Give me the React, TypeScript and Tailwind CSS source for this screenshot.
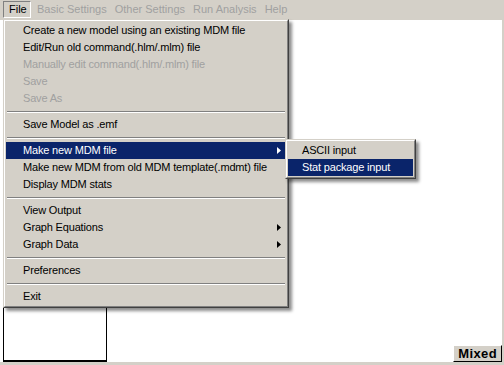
import React from 'react';

type Item =
  | { kind: 'item'; label: string; disabled?: boolean; active?: boolean; sub?: boolean }
  | { kind: 'sep' };

const fileMenu: Item[] = [
  { kind: 'item', label: 'Create a new model using an existing MDM file' },
  { kind: 'item', label: 'Edit/Run old command(.hlm/.mlm) file' },
  { kind: 'item', label: 'Manually edit command(.hlm/.mlm) file', disabled: true },
  { kind: 'item', label: 'Save', disabled: true },
  { kind: 'item', label: 'Save As', disabled: true },
  { kind: 'sep' },
  { kind: 'item', label: 'Save Model as .emf' },
  { kind: 'sep' },
  { kind: 'item', label: 'Make new MDM file', active: true, sub: true },
  { kind: 'item', label: 'Make new MDM from old MDM template(.mdmt) file' },
  { kind: 'item', label: 'Display MDM stats' },
  { kind: 'sep' },
  { kind: 'item', label: 'View Output' },
  { kind: 'item', label: 'Graph Equations', sub: true },
  { kind: 'item', label: 'Graph Data', sub: true },
  { kind: 'sep' },
  { kind: 'item', label: 'Preferences' },
  { kind: 'sep' },
  { kind: 'item', label: 'Exit' },
];

const subMenu: Item[] = [
  { kind: 'item', label: 'ASCII input' },
  { kind: 'item', label: 'Stat package input', active: true },
];

function Arrow({ white }: { white?: boolean }) {
  return (
    <svg width="4" height="7" viewBox="0 0 4 7" className="shrink-0">
      <path d="M0 0 L4 3.5 L0 7 Z" fill={white ? '#ffffff' : '#000000'} />
    </svg>
  );
}

function MenuList({ items, pl }: { items: Item[]; pl: string }) {
  return (
    <div className="flex flex-col p-px">
      {items.map((it, i) =>
        it.kind === 'sep' ? (
          <div key={i} className="h-[9px] flex flex-col justify-center px-px">
            <div className="h-px bg-[#808080]" />
            <div className="h-px bg-white" />
          </div>
        ) : (
          <div
            key={i}
            className={`h-[17px] flex items-center justify-between pr-[5px] ${pl} ${
              it.active ? 'bg-[#0a246a] text-white' : it.disabled ? 'text-[#a0a0a0]' : 'text-black'
            }`}
          >
            <span className="whitespace-nowrap tracking-[-0.17px]">{it.label}</span>
            {it.sub && <Arrow white={it.active} />}
          </div>
        )
      )}
    </div>
  );
}

export default function App() {
  return (
    <div
      className="relative w-[504px] h-[365px] bg-[#d4d0c8] overflow-hidden text-[11px] leading-[17px]"
      style={{ fontFamily: '"Liberation Sans", Arial, sans-serif' }}
    >
      {/* menu bar */}
      <div className="h-[20px] flex items-start pt-px pl-[3px] text-[#a0a0a0]">
        <div className="h-[17px] w-[28px] pl-[5px] border border-t-[#808080] border-l-[#808080] border-b-white border-r-white text-black flex items-center">
          File
        </div>
        <div className="pl-[6px] pr-[4px] h-[17px] flex items-center">Basic Settings</div>
        <div className="px-[4px] h-[17px] flex items-center">Other Settings</div>
        <div className="px-[4px] h-[17px] flex items-center">Run Analysis</div>
        <div className="px-[4px] h-[17px] flex items-center">Help</div>
      </div>

      {/* workspace */}
      <div className="relative h-[342px] mr-[2px] bg-white">
        <div className="absolute left-[3px] top-[275px] w-[104px] h-[67px] border border-black border-b-2 bg-white" />
        <div className="absolute right-0 bottom-0 h-[17px] px-[4px] flex items-center bg-[#d4d0c8] border border-t-white border-l-white border-r-black border-b-black font-bold text-[13px] text-black tracking-[0.4px]">
          Mixed
        </div>
      </div>

      {/* File dropdown */}
      <div className="absolute left-[3px] top-[19px] w-[286px] border border-t-[#d4d0c8] border-l-[#d4d0c8] border-r-[#404040] border-b-[#404040] bg-[#d4d0c8] shadow-[3px_3px_3px_rgba(0,0,0,0.45)]">
        <div className="border border-t-white border-l-white border-r-[#808080] border-b-[#808080]">
          <MenuList items={fileMenu} pl="pl-[17px]" />
        </div>
      </div>

      {/* submenu */}
      <div className="absolute left-[285px] top-[139px] w-[131px] border border-t-[#d4d0c8] border-l-[#d4d0c8] border-r-[#404040] border-b-[#404040] bg-[#d4d0c8] shadow-[3px_3px_3px_rgba(0,0,0,0.45)]">
        <div className="border border-t-white border-l-white border-r-[#808080] border-b-[#808080]">
          <MenuList items={subMenu} pl="pl-[14px]" />
        </div>
      </div>
    </div>
  );
}
